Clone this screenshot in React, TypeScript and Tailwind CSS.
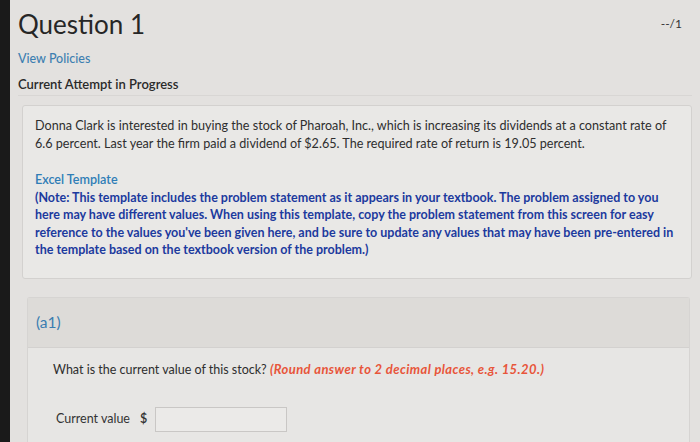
export default function App() {
  return (
    <div className="flex h-[442px] w-[700px] overflow-hidden bg-[#e3e1df] font-['Lato',sans-serif] text-[#2b2b2b]">
      <div className="w-[10px] shrink-0 bg-[#1a1a1a]" />
      <div className="flex min-w-0 flex-1 flex-col pl-[8px] pr-[8px]">
        <div className="flex items-start justify-between border-b border-[#d8d6d4] pb-[3px]">
          <div>
            <h1 className="mt-[9px] text-[26px] leading-[30px] text-[#262626]">Question 1</h1>
            <div className="mt-[12px] text-[12.5px] font-medium leading-[16px] text-[#3d7fb1]">View Policies</div>
            <div className="mt-[9px] text-[13px] font-semibold leading-[16px] text-[#2a2a2a]">
              Current Attempt in Progress
            </div>
          </div>
          <div className="mr-[10px] mt-[15px] text-[12px] text-[#333]">--/1</div>
        </div>

        <div className="ml-[4px] mt-[9px] rounded-[3px] border border-[#d3d1cf] bg-[#e9e8e6] px-[12px] pb-[20px] pt-[11px] text-[12.6px] leading-[18px]">
          <p className="text-[#2e2e2e]">
            Donna Clark is interested in buying the stock of Pharoah, Inc., which is increasing its dividends at a constant rate of
            6.6 percent. Last year the firm paid a dividend of $2.65. The required rate of return is 19.05 percent.
          </p>
          <p className="mt-[18px] font-semibold text-[#2f7db6]">Excel Template</p>
          <p className="text-[12.5px] font-bold leading-[17.3px] text-[#1c3a9e]">
            (Note: This template includes the problem statement as it appears in your textbook. The problem assigned to you
            here may have different values. When using this template, copy the problem statement from this screen for easy
            reference to the values you've been given here, and be sure to update any values that may have been pre-entered
            in the template based on the textbook version of the problem.)
          </p>
        </div>

        <div className="ml-[9px] mr-[2px] mt-[18px] flex flex-1 flex-col rounded-t-[3px] border border-b-0 border-[#d6d4d2]">
          <div className="flex h-[50px] items-center border-b border-[#d3d1cf] bg-[#dddbd8] px-[8px] text-[15.5px] text-[#3a7db0]">
            (a1)
          </div>
          <div className="flex-1 bg-[#e7e6e4] pl-[25px] pt-[12px] text-[12.5px]">
            <p className="text-[#2e2e2e]">
              What is the current value of this stock?{" "}
              <span className="text-[13px] font-bold italic tracking-[0.4px] text-[#e8553a]">
                (Round answer to 2 decimal places, e.g. 15.20.)
              </span>
            </p>
            <div className="mt-[27px] flex items-center">
              <span className="ml-[3px] text-[#333]">Current value</span>
              <span className="ml-[10px] font-semibold text-[#333]">$</span>
              <div className="ml-[8px] h-[25px] w-[132px] border border-[#c9c7c5] bg-[#ebeae8]" />
            </div>
          </div>
        </div>
      </div>
    </div>
  );
}
